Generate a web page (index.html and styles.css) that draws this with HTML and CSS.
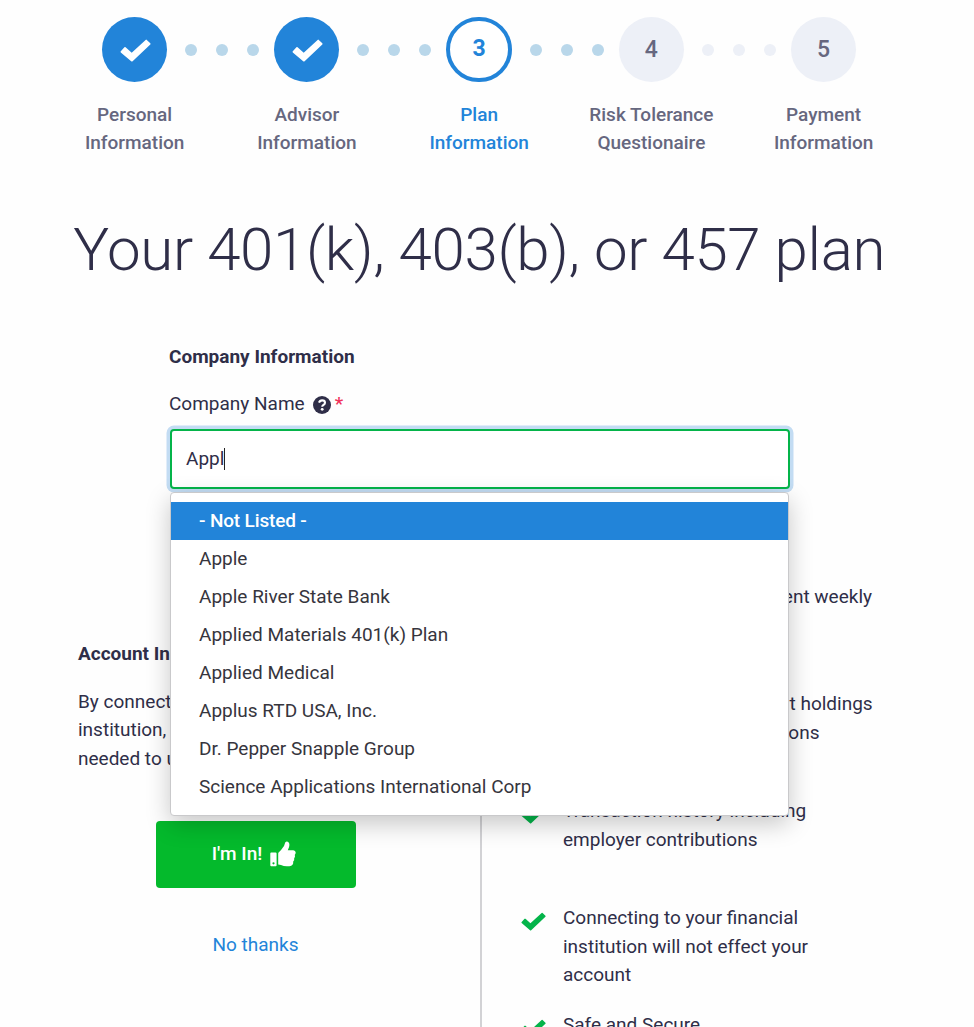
FILE: index.html
```html
<!DOCTYPE html>
<html lang="en">
<head>
    <meta charset="utf-8">
    <title>Plan Information</title>
    <link rel="stylesheet" href="styles.css">
</head>
<body>
    <svg class="sprite">
        <symbol id="check" viewBox="0 0 31 23">
            <path d="M0.8 12.2 L4.4 8.2 Q5 7.7 5.6 8.2 L11.7 13.8 L25.6 0.9 Q26.2 0.3 26.8 0.9 L30.3 4.3 Q30.9 5 30.3 5.6 L12.6 22.2 Q11.9 22.9 11.2 22.2 L0.8 13.4 Q0.2 12.8 0.8 12.2 Z"/>
        </symbol>
    </svg>

    <div class="steps">
        <div class="step done">
            <div class="track">
                <div class="circle"><svg><use href="#check"/></svg></div>
                <i></i><i></i><i></i>
            </div>
            <div class="label">Personal<br>Information</div>
        </div>
        <div class="step done">
            <div class="track">
                <div class="circle"><svg><use href="#check"/></svg></div>
                <i></i><i></i><i></i>
            </div>
            <div class="label">Advisor<br>Information</div>
        </div>
        <div class="step active">
            <div class="track">
                <div class="circle">3</div>
                <i></i><i></i><i></i>
            </div>
            <div class="label">Plan<br>Information</div>
        </div>
        <div class="step">
            <div class="track">
                <div class="circle">4</div>
                <i></i><i></i><i></i>
            </div>
            <div class="label">Risk Tolerance<br>Questionaire</div>
        </div>
        <div class="step">
            <div class="track">
                <div class="circle">5</div>
            </div>
            <div class="label">Payment<br>Information</div>
        </div>
    </div>

    <h1>Your 401(k), 403(b), or 457 plan</h1>

    <div class="company">
        <h2>Company Information</h2>
        <label class="field-label">Company Name
            <svg class="help" viewBox="0 0 18 18">
                <circle cx="9" cy="9" r="9"/>
                <path d="M6 6.7 Q6.8 4.4 9.1 4.4 Q12 4.4 12 6.8 Q12 8.2 10.4 9 Q9.2 9.6 9.2 10.8" fill="none" stroke="#fff" stroke-width="2.1"/>
                <circle cx="9.2" cy="13.3" r="1.4" fill="#fff"/>
            </svg>
            <span class="required">*</span>
        </label>
        <div class="combo">
            <div class="input"><span>Appl</span><span class="caret"></span></div>
            <div class="menu">
                <div class="option selected">- Not Listed -</div>
                <div class="option">Apple</div>
                <div class="option">Apple River State Bank</div>
                <div class="option">Applied Materials 401(k) Plan</div>
                <div class="option">Applied Medical</div>
                <div class="option">Applus RTD USA, Inc.</div>
                <div class="option">Dr. Pepper Snapple Group</div>
                <div class="option">Science Applications International Corp</div>
            </div>
        </div>
    </div>

    <div class="account">
        <div class="connect">
            <h2>Account Information</h2>
            <p>By connecting to your financial<br>institution, we get the information<br>needed to update your account</p>
            <div class="actions">
                <button class="btn">I'm In!
                    <svg class="thumb" viewBox="0 0 26 26">
                        <path fill-rule="evenodd" d="M1.2 11.6 H5.6 Q6.6 11.6 6.6 12.6 V24.2 Q6.6 25.2 5.6 25.2 H1.2 Q0.3 25.2 0.3 24.2 V12.6 Q0.3 11.6 1.2 11.6 Z M3.5 21.2 A1.1 1.1 0 1 0 3.5 23.4 A1.1 1.1 0 1 0 3.5 21.2 Z"/>
                        <path d="M8.2 12.4 Q8.2 11.4 9.6 10.5 Q11 9.2 12.5 6.9 Q14.4 5.1 14.7 3 Q15 0.4 16.6 0.4 Q19.4 0.5 19.4 4 Q19.4 6.3 17.8 9.2 H23.3 Q25.6 9.4 25.7 11.6 Q25.7 13 24.8 13.7 Q25.5 15.7 24.2 17.2 Q24.6 19.3 23.2 20.6 Q23.7 24.9 19.4 25.3 H16.8 Q13.6 25.3 11 24 Q9.8 23.4 8.2 23.4 Z"/>
                    </svg>
                </button>
                <a class="skip">No thanks</a>
            </div>
        </div>
        <ul class="benefits">
            <li><svg><use href="#check"/></svg><span>Each account statement sent weekly</span></li>
            <li><svg><use href="#check"/></svg><span>Reviews current investment holdings<br>and any available fund options</span></li>
            <li><svg><use href="#check"/></svg><span>Transaction history including<br>employer contributions</span></li>
            <li><svg><use href="#check"/></svg><span>Connecting to your financial<br>institution will not effect your<br>account</span></li>
            <li><svg><use href="#check"/></svg><span>Safe and Secure</span></li>
        </ul>
    </div>
</body>
</html>
```
FILE: styles.css
```css
* {
    box-sizing: border-box;
}
body {
    margin: 0;
    height: 1027px;
    overflow: hidden;
    background: #fefefe;
    color: #2f2e48;
    font: 400 19px/28.5px Roboto, sans-serif;
}
.sprite {
    display: none;
}

/* progress steps */
.steps {
    display: flex;
    padding: 16.5px 0 0 48.5px;
}
.step {
    width: 172.25px;
    color: #66677f;
}
.track {
    display: flex;
    align-items: center;
    padding-left: 53.3px;
}
.circle {
    display: flex;
    flex: none;
    align-items: center;
    justify-content: center;
    width: 65.4px;
    height: 65.4px;
    margin-right: 18px;
    border-radius: 50%;
    background: #edf0f7;
    font-size: 23px;
    font-weight: 500;
}
.step:nth-child(n+4) .circle {
    padding-top: 2px;
}
.circle svg {
    width: 31px;
    height: 23px;
    margin: 2px 0 0 2px;
    fill: #fff;
}
.track i {
    flex: none;
    width: 12px;
    height: 12px;
    margin: 1px 19px 0 0;
    border-radius: 50%;
    background: #edf0f7;
}
.done i, .active i {
    background: #b9d7ea;
}
.done .circle {
    background: #2284d9;
}
.active .circle {
    border: 4.5px solid #2284d9;
    background: #fff;
    font-weight: 700;
}
.step.active {
    color: #2284d9;
}
.label {
    margin-top: 19px;
    text-align: center;
    font-weight: 500;
}

h1 {
    margin: 56.5px 0 0;
    padding-right: 15.5px;
    text-align: center;
    font-size: 60px;
    line-height: 72px;
    font-weight: 300;
    letter-spacing: -0.33px;
    white-space: nowrap;
}
h2 {
    margin: 0 0 19px;
    font-size: 19px;
    line-height: 28.5px;
    font-weight: 700;
}

/* company picker */
.company {
    width: 621px;
    margin: 56.6px 0 0 169px;
}
.field-label {
    display: flex;
    align-items: center;
}
.help {
    width: 18px;
    height: 18px;
    margin: 0 4px 0 8px;
    fill: #2f2e48;
}
.required {
    color: #f0325a;
    font-weight: 500;
}
.combo {
    position: relative;
    margin: 9.9px 0 0 1px;
}
.input {
    display: flex;
    align-items: center;
    height: 60px;
    padding-left: 14px;
    border: 2px solid #04b44a;
    border-radius: 4px;
    background: #fff;
    box-shadow: 0 0 0 3.5px #c3dcf3;
}
.caret {
    width: 1px;
    height: 22px;
    background: #222;
}
.menu {
    position: absolute;
    top: 63px;
    left: 0;
    width: 619px;
    padding: 9px 0;
    border: 1px solid #c9c9cb;
    border-radius: 4px;
    background: #fff;
    box-shadow: 0 8px 24px rgba(0, 0, 0, 0.22);
    color: #36353d;
}
.option {
    height: 38px;
    padding-left: 28px;
    line-height: 37px;
}
.option.selected {
    background: #2284d9;
    color: #fff;
    font-weight: 500;
    letter-spacing: -0.15px;
}

/* account section */
.account {
    display: flex;
    margin: 94.5px 0 0 78px;
}
.connect {
    width: 404px;
    padding-top: 57px;
    border-right: 2px solid #d2d2d5;
}
p {
    margin: 0;
}
.actions {
    display: flex;
    flex-direction: column;
    align-items: center;
    width: 355px;
    margin-top: 48px;
}
.btn {
    display: flex;
    align-items: center;
    justify-content: center;
    width: 200px;
    height: 67px;
    padding: 0 3px 2px 0;
    border: 0;
    border-radius: 4px;
    background: #04ba2c;
    color: #fff;
    font: 500 19px Roboto, sans-serif;
}
.thumb {
    width: 26px;
    height: 26px;
    margin-left: 8px;
    fill: #fff;
}
.skip {
    margin-top: 43px;
    color: #2284d9;
}
.benefits {
    height: 424px;
    margin: 0;
    padding: 0 0 0 39px;
    list-style: none;
}
.connect {
    height: 480px;
}
.benefits li {
    display: flex;
    min-height: 107px;
    white-space: nowrap;
}
.benefits svg {
    flex: none;
    width: 25px;
    height: 19px;
    margin: 8px 17px 0 0;
    fill: #04b44a;
}
```
